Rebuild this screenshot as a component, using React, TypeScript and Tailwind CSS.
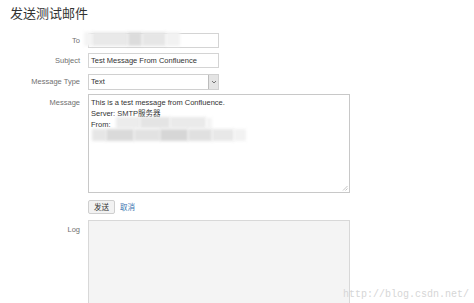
import React from "react";

const blurBox = (x: number, y: number, w: number, h: number, c: string) => (
  <div
    key={`${x}-${y}`}
    className="absolute blur-[1.5px]"
    style={{ left: x, top: y, width: w, height: h, background: c }}
  />
);

export default function App() {
  return (
    <div className="relative w-[474px] h-[303px] overflow-hidden bg-white font-['Liberation_Sans',Arial,sans-serif] text-[7.5px] text-[#333]">
      <div className="pl-[10px] pt-[4px] text-[13px] leading-[17px] text-[#333] font-['Noto_Sans_CJK_SC',sans-serif]">
        发送测试邮件
      </div>

      <div className="mt-[12px] flex flex-col">
        {/* To */}
        <div className="flex items-center">
          <div className="w-[80px] text-right text-[#707070]">To</div>
          <div className="ml-[8px] w-[131px] h-[15px] border border-[#d4d4d4] bg-white" />
        </div>
        {/* Subject */}
        <div className="mt-[5px] flex items-center">
          <div className="w-[80px] text-right text-[#707070]">Subject</div>
          <div className="ml-[8px] w-[131px] h-[15px] border border-[#d4d4d4] bg-white flex items-center pl-[2px] leading-none">
            Test Message From Confluence
          </div>
        </div>
        {/* Message Type */}
        <div className="mt-[6px] flex items-center">
          <div className="w-[80px] text-right text-[#707070]">Message Type</div>
          <div className="ml-[8px] w-[131px] h-[16px] border border-[#d0d0d0] bg-white flex items-center leading-none">
            <div className="flex-1 pl-[2px]">Text</div>
            <div className="w-[10px] h-full bg-[#e4e4e4] border-l border-[#bcbcbc] flex items-center justify-center">
              <svg width="6" height="4" viewBox="0 0 6 4">
                <polyline points="1,1 3,3 5,1" fill="none" stroke="#666" strokeWidth="0.9" />
              </svg>
            </div>
          </div>
        </div>
        {/* Message */}
        <div className="mt-[4px] flex items-start">
          <div className="w-[80px] text-right text-[#707070] pt-[3px] leading-[11px]">Message</div>
          <div className="relative ml-[8px] w-[262px] h-[99px] border border-[#c8c8c8] bg-white px-[2px] pt-[2px] leading-[11px]">
            <div>This is a test message from Confluence.</div>
            <div className="font-['Liberation_Sans','Noto_Sans_CJK_SC',sans-serif]">Server: SMTP服务器</div>
            <div>From:</div>
            <svg className="absolute right-[1px] bottom-[1px]" width="6" height="6" viewBox="0 0 6 6">
              <line x1="5.5" y1="1" x2="1" y2="5.5" stroke="#aaa" strokeWidth="0.7" />
              <line x1="5.5" y1="3.5" x2="3.5" y2="5.5" stroke="#aaa" strokeWidth="0.7" />
            </svg>
          </div>
        </div>
        {/* Buttons */}
        <div className="mt-[7px] flex items-center">
          <div className="w-[80px]" />
          <div className="ml-[8px] h-[14px] w-[27px] flex items-center justify-center border border-[#cfcfcf] rounded-[2px] bg-[#f2f2f2] font-['Noto_Sans_CJK_SC',sans-serif] text-[7.5px] leading-none text-[#333]">
            发送
          </div>
          <div className="ml-[5px] font-['Noto_Sans_CJK_SC',sans-serif] text-[7.5px] leading-none text-[#3b73af]">取消</div>
        </div>
        {/* Log */}
        <div className="mt-[6px] flex items-start">
          <div className="w-[80px] text-right text-[#707070] pt-[5px] leading-[10px]">Log</div>
          <div className="ml-[8px] w-[262px] h-[100px] border border-[#d8d8d8] bg-[#f4f4f4]" />
        </div>
      </div>

      {/* redactions */}
      {blurBox(84, 32, 8, 14, "#f4f4f4")}
      {blurBox(92, 32, 36, 14, "#e9e9e9")}
      {blurBox(128, 32, 14, 14, "#dcdcdc")}
      {blurBox(142, 32, 24, 14, "#e6e6e6")}
      {blurBox(166, 32, 14, 14, "#f2f2f2")}

      {blurBox(116, 117, 24, 11, "#ececec")}
      {blurBox(140, 117, 30, 11, "#e4e4e4")}
      {blurBox(170, 117, 36, 11, "#eaeaea")}
      {blurBox(206, 118, 6, 10, "#f4f4f4")}
      {blurBox(92, 129, 14, 12, "#e6e6e6")}
      {blurBox(106, 129, 28, 12, "#dadada")}
      {blurBox(134, 129, 26, 12, "#e2e2e2")}
      {blurBox(160, 129, 28, 12, "#d6d6d6")}
      {blurBox(188, 129, 24, 12, "#e0e0e0")}
      {blurBox(212, 129, 22, 12, "#e8e8e8")}
      {blurBox(234, 129, 12, 12, "#f2f2f2")}

      <div className="absolute left-[343px] top-[289px] font-['Liberation_Mono',monospace] text-[10px] leading-[12px] text-[#d6d6d6]">
        http://blog.csdn.net/
      </div>
    </div>
  );
}
